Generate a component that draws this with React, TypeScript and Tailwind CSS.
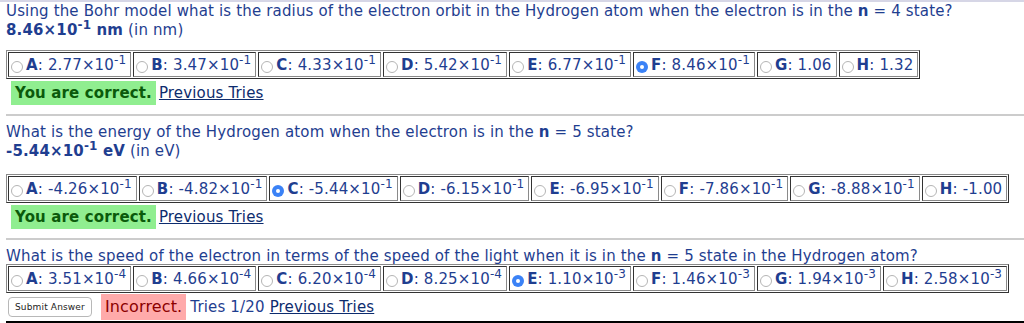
import React from "react";

type Option = {
  label: string;
  value: string;
  exp?: string;
  checked?: boolean;
};

const q1: Option[] = [
  { label: "A", value: "2.77×10", exp: "-1" },
  { label: "B", value: "3.47×10", exp: "-1" },
  { label: "C", value: "4.33×10", exp: "-1" },
  { label: "D", value: "5.42×10", exp: "-1" },
  { label: "E", value: "6.77×10", exp: "-1" },
  { label: "F", value: "8.46×10", exp: "-1", checked: true },
  { label: "G", value: "1.06" },
  { label: "H", value: "1.32" },
];

const q2: Option[] = [
  { label: "A", value: "-4.26×10", exp: "-1" },
  { label: "B", value: "-4.82×10", exp: "-1" },
  { label: "C", value: "-5.44×10", exp: "-1", checked: true },
  { label: "D", value: "-6.15×10", exp: "-1" },
  { label: "E", value: "-6.95×10", exp: "-1" },
  { label: "F", value: "-7.86×10", exp: "-1" },
  { label: "G", value: "-8.88×10", exp: "-1" },
  { label: "H", value: "-1.00" },
];

const q3: Option[] = [
  { label: "A", value: "3.51×10", exp: "-4" },
  { label: "B", value: "4.66×10", exp: "-4" },
  { label: "C", value: "6.20×10", exp: "-4" },
  { label: "D", value: "8.25×10", exp: "-4" },
  { label: "E", value: "1.10×10", exp: "-3", checked: true },
  { label: "F", value: "1.46×10", exp: "-3" },
  { label: "G", value: "1.94×10", exp: "-3" },
  { label: "H", value: "2.58×10", exp: "-3" },
];

function Radio({ checked }: { checked?: boolean }) {
  if (checked) {
    return (
      <span className="mr-[3px] mt-[3px] inline-flex size-[12px] shrink-0 items-center justify-center rounded-full bg-[#3b82f6]">
        <span className="size-[4px] rounded-full bg-white" />
      </span>
    );
  }
  return (
    <span className="mr-[3px] mt-[3px] inline-block size-[12px] shrink-0 rounded-full border border-[#b5b5b5] bg-white" />
  );
}

function Sup({ children }: { children: React.ReactNode }) {
  return <sup className="text-[12px] leading-none">{children}</sup>;
}

function Choices({ options }: { options: Option[] }) {
  return (
    <div className="inline-flex gap-[2px] border border-t-[#8a8a8a] border-l-[#8a8a8a] border-r-[#333] border-b-[#333] p-[1px]">
      {options.map((o) => (
        <div
          key={o.label}
          className="flex items-center border border-t-[#333] border-l-[#333] border-r-[#8a8a8a] border-b-[#8a8a8a] pb-[1px] pl-[2px] pr-[4px] pt-[2px] leading-[20px]"
        >
          <Radio checked={o.checked} />
          <span className="whitespace-nowrap">
            <b>{o.label}</b>: {o.value}
            {o.exp ? <Sup>{o.exp}</Sup> : null}
          </span>
        </div>
      ))}
    </div>
  );
}

function Correct() {
  return (
    <div className="flex items-center gap-[3px] pl-[11px]">
      <span className="bg-[#90ee90] px-[4px] py-[1px] font-bold leading-[22px] text-[#0b5a0b]">
        You are correct.
      </span>
      <span className="text-[#0d2c6e] underline">Previous Tries</span>
    </div>
  );
}

export default function App() {
  return (
    <div
      className="h-[323px] w-[1024px] overflow-hidden border-t-2 border-[#d6d6e6] bg-white text-[15px] tracking-[0.15px] text-[#1f3e90]"
      style={{ fontFamily: '"DejaVu Sans", Verdana, sans-serif' }}
    >
      <div className="px-[6px] leading-[18px]">
        <p>
          Using the Bohr model what is the radius of the electron orbit in the Hydrogen atom when
          the electron is in the <b>n</b> = 4 state?
        </p>
        <p className="pt-[1px]">
          <b>
            8.46×10<Sup>-1</Sup> nm
          </b>{" "}
          (in nm)
        </p>
      </div>
      <div className="mt-[11px] pl-[6px]">
        <Choices options={q1} />
      </div>
      <div className="mt-[2px]">
        <Correct />
      </div>

      <div className="ml-[6px] mt-[9px] h-[2px] bg-[#cccccc]" />

      <div className="px-[6px] pt-[7px] leading-[19px]">
        <p>
          What is the energy of the Hydrogen atom when the electron is in the <b>n</b> = 5 state?
        </p>
        <p>
          <b>
            -5.44×10<Sup>-1</Sup> eV
          </b>{" "}
          (in eV)
        </p>
      </div>
      <div className="mt-[13px] pl-[6px]">
        <Choices options={q2} />
      </div>
      <div className="mt-[2px]">
        <Correct />
      </div>

      <div className="ml-[6px] mt-[9px] h-[2px] bg-[#cccccc]" />

      <div className="px-[6px] pt-[8px] leading-[16px]">
        <p>
          What is the speed of the electron in terms of the speed of the light when it is in the{" "}
          <b>n</b> = 5 state in the Hydrogen atom?
        </p>
      </div>
      <div className="pl-[6px]">
        <Choices options={q3} />
      </div>
      <div className="mt-[1px] flex items-center pl-[8px]">
        <button className="mr-[9px] rounded-[4px] border border-[#b8b8b8] bg-white px-[6px] py-[3px] text-[9px] leading-[12px] text-[#222]">
          Submit Answer
        </button>
        <span className="bg-[#ffaaaa] px-[4px] py-[2px] text-[16px] leading-[22px] text-[#8b0000]">
          Incorrect.
        </span>
        <span className="ml-[4px]">Tries 1/20</span>
        <span className="ml-[5px] text-[#0d2c6e] underline">Previous Tries</span>
      </div>
      <div className="ml-[6px] mt-[1px] h-[2px] bg-black" />
    </div>
  );
}
